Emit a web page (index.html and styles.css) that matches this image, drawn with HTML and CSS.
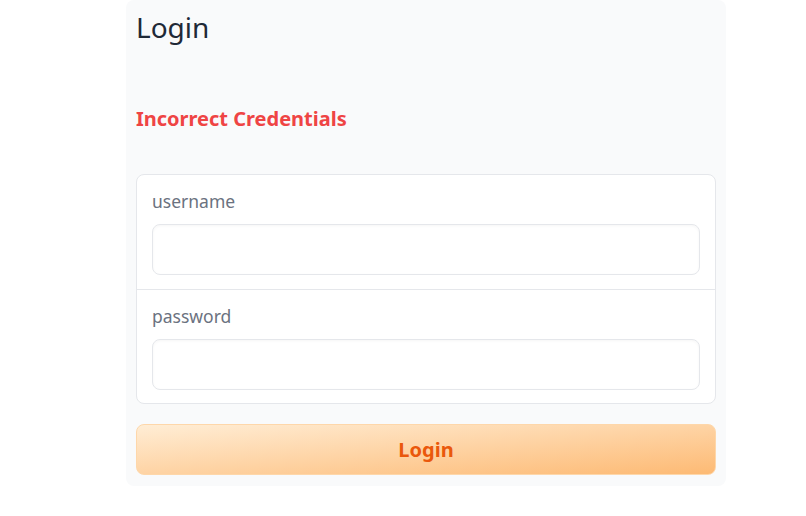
FILE: index.html
```html
<!DOCTYPE html>
<html lang="en">
<head>
<meta charset="utf-8">
<title>Login</title>
<link rel="stylesheet" href="styles.css">
</head>
<body>
<div class="panel">
  <h1 class="title">Login</h1>
  <p class="error">Incorrect Credentials</p>
  <form class="form">
    <label class="field">
      <span class="label">username</span>
      <input class="input" type="text">
    </label>
    <label class="field field-divided">
      <span class="label">password</span>
      <input class="input" type="password">
    </label>
  </form>
  <button class="btn" type="button">Login</button>
</div>
</body>
</html>
```
FILE: styles.css
```css
* { box-sizing: border-box; }
html, body { margin: 0; padding: 0; background: #ffffff; }
body { font-family: "Noto Sans", "Open Sans", sans-serif; }
.panel {
  width: 600px;
  margin-left: 126px;
  background: #f9fafb;
  border-radius: 8px;
  padding: 10px 10px 11px;
  display: flex;
  flex-direction: column;
}
.title {
  margin: 0;
  font-size: 28px;
  line-height: 34px;
  font-weight: 400;
  color: #1f2937;
}
.error {
  margin: 61px 0 0;
  font-size: 20px;
  line-height: 28px;
  font-weight: 700;
  color: #ef4444;
}
.form {
  margin: 41px 0 0;
  background: #ffffff;
  border: 1px solid #e5e7eb;
  border-radius: 8px;
  display: flex;
  flex-direction: column;
}
.field {
  display: flex;
  flex-direction: column;
  gap: 10px;
  padding: 14px 15px 14px;
}
.field-divided { border-top: 1px solid #e5e7eb; padding-bottom: 13px; }
.label {
  font-size: 17.5px;
  line-height: 25px;
  color: #6b7280;
}
.input {
  height: 51px;
  border: 1px solid #e5e7eb;
  border-radius: 8px;
  background: #ffffff;
  box-shadow: inset 0 1px 3px rgba(0,0,0,0.04);
  outline: none;
  font: inherit;
}
.btn {
  margin-top: 20px;
  height: 51px;
  border: 1px solid #fed7aa;
  border-radius: 8px;
  background: linear-gradient(to bottom right, #ffedd5, #fdba74);
  color: #ea580c;
  font-family: inherit;
  font-size: 20px;
  font-weight: 700;
}
```
